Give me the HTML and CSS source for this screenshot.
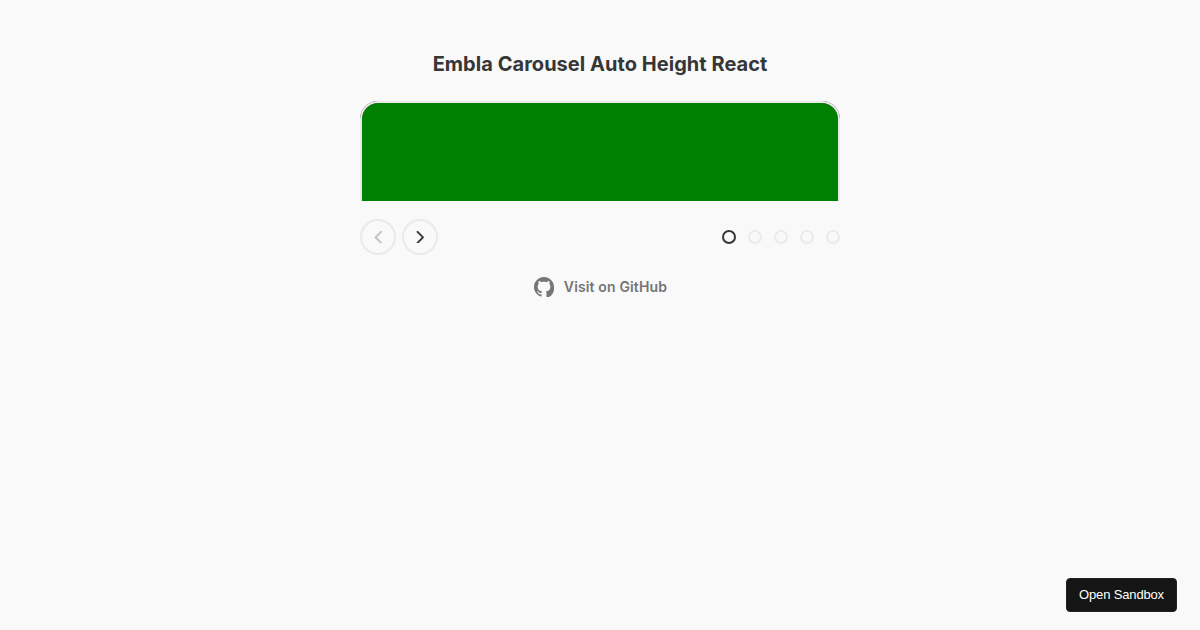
FILE: index.html
```
<!DOCTYPE html>
<html lang="en">
<head>
    <meta charset="UTF-8">
    <meta name="viewport" content="width=device-width, initial-scale=1.0">
    <title>Embla Carousel Auto Height React</title>
    <link rel="stylesheet" href="styles.css">
</head>
<body>
    <header class="header">
        <h1 class="header__h1">Embla Carousel Auto Height React</h1>
    </header>

    <section class="embla">
        <div class="embla__viewport">
            <div class="embla__slide"></div>
        </div>

        <div class="embla__controls">
            <div class="embla__buttons">
                <button class="embla__button" type="button" aria-label="Previous" disabled>
                    <svg class="embla__button__svg" viewBox="0 0 532 532">
                        <path fill="currentColor" d="M355.66 11.354c13.793-13.805 36.208-13.805 50.001 0 13.785 13.804 13.785 36.238 0 50.034L201.22 266l204.442 204.61c13.785 13.805 13.785 36.239 0 50.044-13.793 13.796-36.208 13.796-50.002 0L126.328 291.2a35.065 35.065 0 0 1-10.326-25.126c0-9.2 3.393-18.26 10.326-25.2C172.192 194.973 332.731 34.31 355.66 11.354Z"/>
                    </svg>
                </button>
                <button class="embla__button" type="button" aria-label="Next">
                    <svg class="embla__button__svg" viewBox="0 0 532 532">
                        <path fill="currentColor" d="M176.34 520.646c-13.793 13.805-36.208 13.805-50.001 0-13.785-13.804-13.785-36.238 0-50.034L330.78 266 126.34 61.391c-13.785-13.805-13.785-36.239 0-50.044 13.793-13.796 36.208-13.796 50.002 0L405.674 240.8A35.065 35.065 0 0 1 416 265.926c0 9.2-3.393 18.26-10.326 25.2-45.865 45.901-206.404 206.564-229.332 229.52Z"/>
                    </svg>
                </button>
            </div>

            <div class="embla__dots">
                <button class="embla__dot embla__dot--selected" type="button" aria-label="Slide 1"></button>
                <button class="embla__dot" type="button" aria-label="Slide 2"></button>
                <button class="embla__dot" type="button" aria-label="Slide 3"></button>
                <button class="embla__dot" type="button" aria-label="Slide 4"></button>
                <button class="embla__dot" type="button" aria-label="Slide 5"></button>
            </div>
        </div>
    </section>

    <footer class="footer">
        <a class="footer__link" href="#">
            <svg class="footer__svg" viewBox="0 0 16 16">
                <path fill="currentColor" fill-rule="evenodd" d="M8 0C3.58 0 0 3.58 0 8c0 3.54 2.29 6.53 5.47 7.59.4.07.55-.17.55-.38 0-.19-.01-.82-.01-1.49-2.01.37-2.53-.49-2.69-.94-.09-.23-.48-.94-.82-1.13-.28-.15-.68-.52-.01-.53.63-.01 1.08.58 1.23.82.72 1.21 1.87.87 2.33.66.07-.52.28-.87.51-1.07-1.78-.2-3.64-.89-3.64-3.95 0-.87.31-1.59.82-2.15-.08-.2-.36-1.02.08-2.12 0 0 .67-.21 2.2.82.64-.18 1.32-.27 2-.27s1.36.09 2 .27c1.53-1.04 2.2-.82 2.2-.82.44 1.1.16 1.92.08 2.12.51.56.82 1.27.82 2.15 0 3.07-1.87 3.75-3.65 3.95.29.25.54.73.54 1.48v3.27c0 .21.15.46.55.38A8.01 8.01 0 0 0 16 8c0-4.42-3.58-8-8-8Z"/>
            </svg>
            <span class="footer__text">Visit on GitHub</span>
        </a>
    </footer>

    <button class="sandbox-button" type="button">Open Sandbox</button>
</body>
</html>
```
FILE: styles.css
```
* {
    box-sizing: border-box;
}

body {
    margin: 0;
    background-color: #f9f9f9;
    color: #363636;
    font-family: Inter, sans-serif;
    -webkit-font-smoothing: antialiased;
}

button {
    appearance: none;
    margin: 0;
    padding: 0;
    border: 0;
    background-color: transparent;
    cursor: pointer;
}

.header {
    padding-top: 48px;
    text-align: center;
}

.header__h1 {
    margin: 0;
    font-size: 20px;
    font-weight: 700;
    line-height: 32px;
    letter-spacing: 0.04px;
}

.embla {
    width: 480px;
    margin: 21px auto 0;
}

.embla__viewport {
    height: 100px;
    overflow: hidden;
}

.embla__slide {
    height: 190px;
    padding: 2px;
    border-radius: 18px;
    background: linear-gradient(green, green) content-box, #111;
    background-clip: content-box, border-box;
    box-shadow: inset 0 0 0 2px #eaeaea;
}

.embla__controls {
    display: flex;
    align-items: center;
    justify-content: space-between;
    margin-top: 18px;
}

.embla__buttons {
    display: flex;
    gap: 6px;
}

.embla__button {
    display: flex;
    align-items: center;
    justify-content: center;
    width: 36px;
    height: 36px;
    border-radius: 50%;
    box-shadow: inset 0 0 0 2px #eaeaea;
    color: #363636;
}

.embla__button:disabled {
    color: #c0c0c0;
}

.embla__button__svg {
    width: 35%;
    height: 35%;
    stroke: currentColor;
    stroke-width: 10;
}

.embla__dots {
    display: flex;
    gap: 12px;
}

.embla__dot {
    width: 14px;
    height: 14px;
    border-radius: 50%;
    box-shadow: inset 0 0 0 2px #eaeaea;
}

.embla__dot--selected {
    box-shadow: inset 0 0 0 2px #363636;
}

.footer {
    display: flex;
    justify-content: center;
    margin-top: 20px;
    padding-left: 1px;
}

.footer__link {
    display: flex;
    align-items: center;
    gap: 10px;
    height: 24px;
    color: #757575;
    font-size: 14px;
    font-weight: 600;
    letter-spacing: 0.14px;
    text-decoration: none;
}

.footer__svg {
    width: 20px;
    height: 20px;
}

.footer__text {
    padding-bottom: 2px;
}

.sandbox-button {
    position: fixed;
    right: 23px;
    bottom: 18px;
    width: 111px;
    height: 34px;
    padding-bottom: 2px;
    border: 1px solid #222;
    border-radius: 4px;
    background-color: #151515;
    color: #fff;
    font-family: "Liberation Sans", Arial, sans-serif;
    font-size: 13px;
    letter-spacing: -0.15px;
}
```
